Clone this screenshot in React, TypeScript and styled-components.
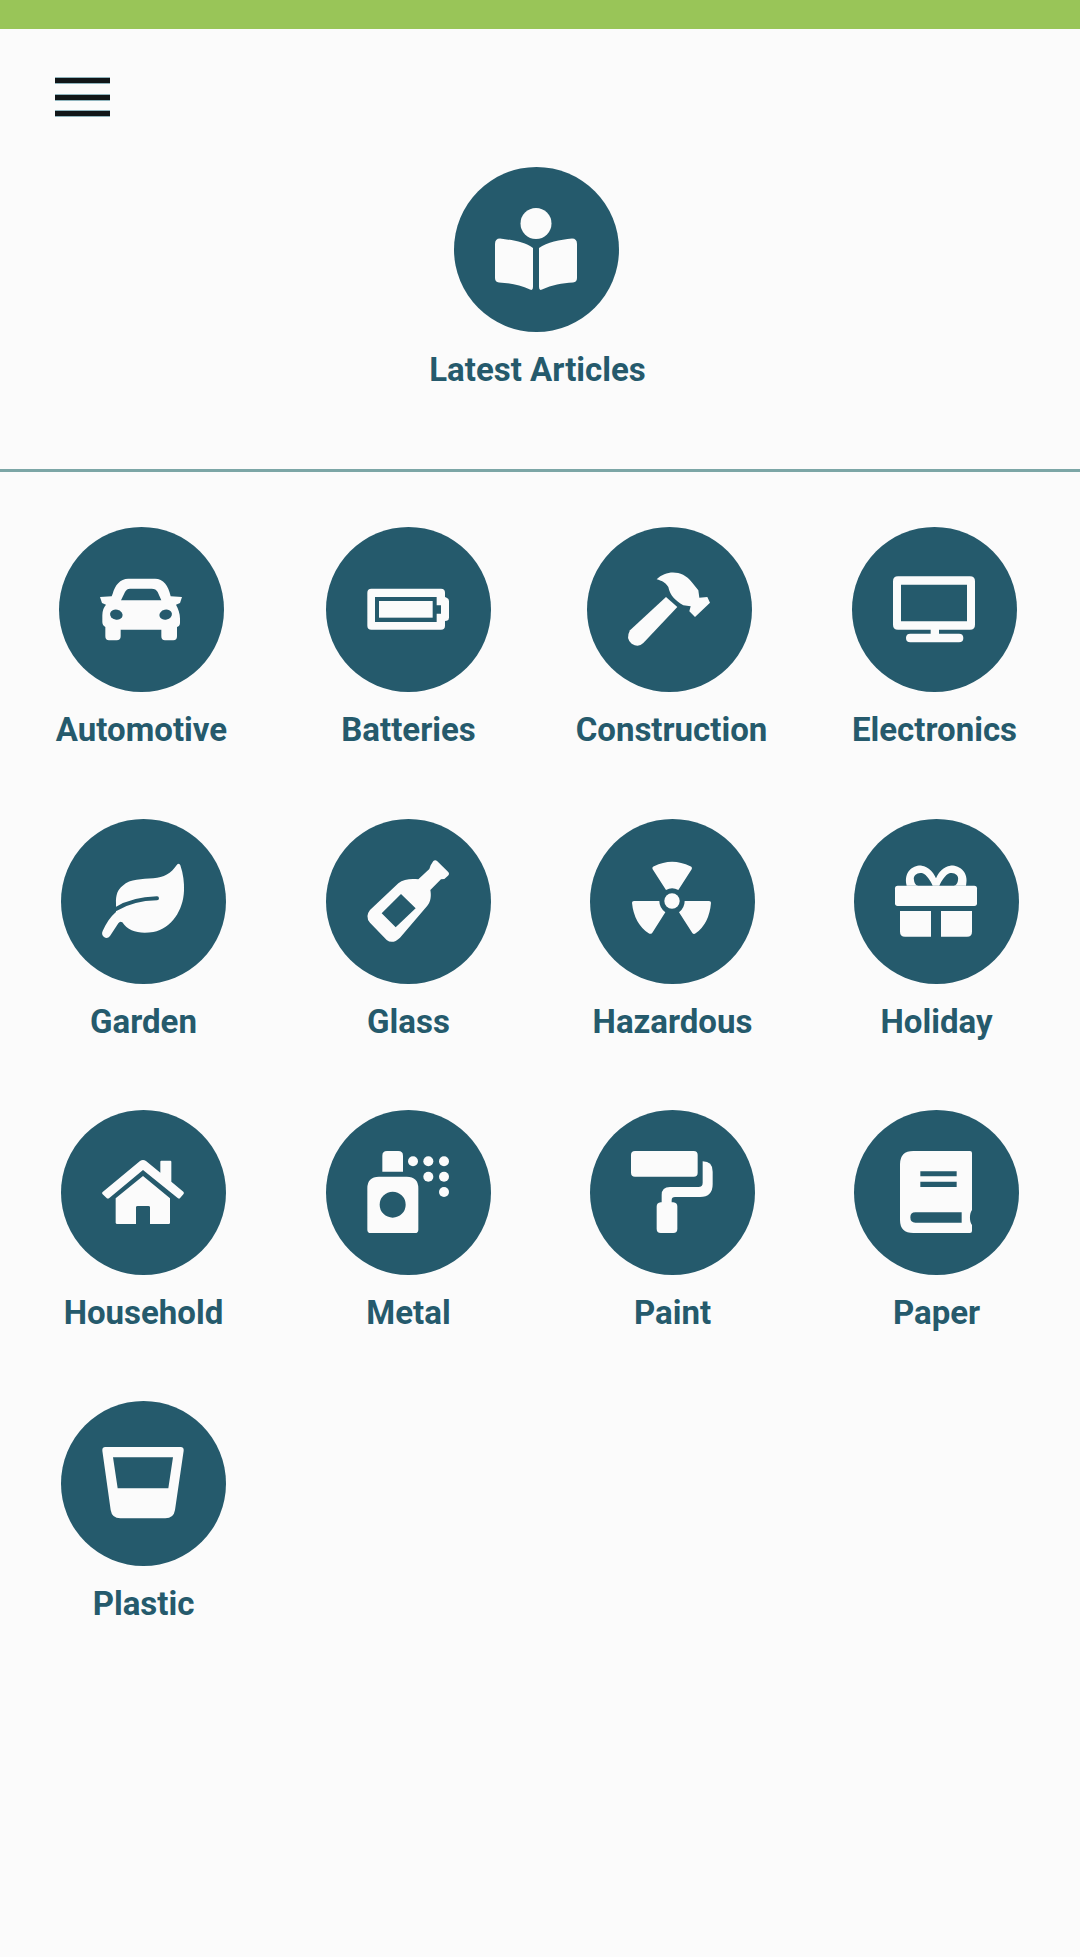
import React from "react";
import styled, { createGlobalStyle } from "styled-components";

const TEAL = "#255a6c";

// every icon's viewBox is 165x165 px of the disc (495 units = 3 units per px)
const CarIcon = () => (
  <Glyph viewBox="57 50 495 495">
    <path
      fillRule="evenodd"
      d="M180 260 L215 258 L218 250 C225 225 240 205 265 205 L345 205 C370 205 385 225 392 258 L426 260 L420 278 L408 283 C415 295 420 310 420 325 L420 338 C420 345 416 349 411 350 L411 378 Q411 390 400 390 L375 390 Q364 390 364 378 L364 358 L242 358 L242 378 Q242 390 230 390 L207 390 Q196 390 196 378 L196 350 Q187 345 187 335 L187 315 C187 300 192 290 198 283 L186 278 Z M243 270 L255 245 Q260 235 270 235 L335 235 Q348 235 353 245 L364 270 Z"
    />
    <Cut as="ellipse" cx="229" cy="313" rx="19" ry="15" transform="rotate(12 229 313)" />
    <Cut as="ellipse" cx="377" cy="313" rx="19" ry="15" transform="rotate(-12 377 313)" />
  </Glyph>
);

const BatteryIcon = () => (
  <Glyph viewBox="858 50 495 495">
    <path
      fillRule="evenodd"
      d="M994 235 L1203 235 Q1215 235 1215 247 L1215 260 L1220 262 Q1227 264 1227 272 L1227 322 Q1227 330 1220 331 L1215 332 L1215 346 Q1215 358 1203 358 L994 358 Q982 358 982 346 L982 247 Q982 235 994 235 Z M1005 260 L1005 335 L1190 335 L1190 310 L1203 310 L1203 285 L1190 285 L1190 260 Z"
    />
    <rect x="1017" y="272" width="161" height="50" />
  </Glyph>
);

const HammerIcon = () => (
  <Glyph viewBox="81 50 495 495">
    <path d="M318 260 L352 290 L250 398 Q235 413 215 400 Q196 385 210 360 Z" />
    <path d="M290 207 C320 178 368 180 395 215 L415 240 L418 262 L442 260 L450 277 L405 320 L388 303 L392 288 L370 285 C345 270 330 255 325 230 C315 215 305 212 290 207 Z" />
  </Glyph>
);

const ScreenIcon = () => (
  <Glyph viewBox="876 50 495 495">
    <path
      fillRule="evenodd"
      d="M1014 198 L1230 198 Q1245 198 1245 213 L1245 343 Q1245 358 1230 358 L1137 358 L1137 370 L1197 370 Q1210 370 1210 383 Q1210 396 1197 396 L1051 396 Q1038 396 1038 383 Q1038 370 1051 370 L1112 370 L1112 358 L1014 358 Q999 358 999 343 L999 213 Q999 198 1014 198 Z M1023 223 L1023 333 L1221 333 L1221 223 Z"
    />
  </Glyph>
);

const LeafIcon = () => (
  <Glyph viewBox="63 57 495 495">
    <path d="M412 193 Q418 188 421 196 C430 222 433 248 432 272 C430 330 395 385 340 396 C300 403 265 395 247 367 Q240 362 235 370 L210 408 Q202 418 192 411 Q183 404 188 393 C198 370 212 350 228 336 L228 310 C227 285 233 268 248 257 C272 236 305 238 340 235 C372 232 392 222 412 193 Z" />
    <Vein d="M351 295 C305 296 262 306 226 328" />
  </Glyph>
);

const BottleIcon = () => (
  <Glyph viewBox="858 57 495 495">
    <path
      fillRule="evenodd"
      d="M1168 207 L1172 196 L1180 183 Q1186 178 1192 184 L1224 215 Q1230 221 1224 227 L1213 237 L1203 238 L1171 270 C1174 285 1173 305 1162 317 L1080 413 Q1058 434 1040 420 L990 368 Q974 350 990 330 L1075 250 C1090 237 1115 235 1135 238 Z M1083 282 L1025 340 L1067 382 L1127 325 Z"
    />
  </Glyph>
);

const HazardIcon = () => (
  <Glyph viewBox="90 57 495 495">
    <circle cx="336" cy="303" r="23" />
    <path d="M278 208 Q275 202 282 199 Q336 172 391 199 Q398 202 395 208 L355 270 Q336 260 318 270 Z" />
    <path d="M216 308 Q216 303 222 303 L298 303 Q298 323 316 337 L277 398 Q272 404 266 400 Q222 370 216 308 Z" />
    <path d="M453 308 Q453 303 447 303 L374 303 Q374 323 357 337 L397 399 Q401 404 407 400 Q448 370 453 308 Z" />
  </Glyph>
);

const GiftIcon = () => (
  <Glyph viewBox="882 57 495 495">
    <path
      fillRule="evenodd"
      d="M1040 257 C1030 215 1060 195 1085 197 C1105 200 1120 215 1128 235 C1136 215 1151 200 1171 197 C1196 195 1228 215 1218 257 Z M1062 240 C1058 225 1075 215 1088 220 C1100 225 1110 240 1118 257 L1075 257 C1068 257 1063 250 1062 240 Z M1194 240 C1198 225 1181 215 1168 220 C1156 225 1146 240 1138 257 L1181 257 C1188 257 1193 250 1194 240 Z"
    />
    <rect x="1005" y="257" width="246" height="61" rx="8" />
    <path d="M1020 333 L1113 333 L1113 410 L1035 410 Q1020 410 1020 395 Z" />
    <path d="M1143 333 L1236 333 L1236 395 Q1236 410 1221 410 L1143 410 Z" />
  </Glyph>
);

const HouseIcon = () => (
  <Glyph viewBox="63 60 495 495">
    <path d="M188 306 L300 213 Q309 207 318 213 L361 248 L361 215 Q361 212 364 212 L391 212 Q394 212 394 215 L394 275 L430 305 Q434 309 430 313 L421 323 Q418 328 413 324 L309 240 L208 324 Q203 328 199 323 L188 313 Q184 309 188 306 Z" />
    <path d="M227 325 L309 258 L390 325 L390 398 Q390 402 386 402 L330 402 L330 352 Q330 348 325 348 L293 348 Q288 348 288 352 L288 402 L232 402 Q227 402 227 398 Z" />
  </Glyph>
);

const SprayIcon = () => (
  <Glyph viewBox="858 60 495 495">
    <path d="M1027 245 L1027 197 Q1027 183 1041 183 L1075 183 Q1089 183 1089 197 L1089 245 Z" />
    <path
      fillRule="evenodd"
      d="M1017 260 L1100 260 Q1135 260 1135 295 L1135 419 Q1135 429 1125 429 L992 429 Q982 429 982 419 L982 295 Q982 260 1017 260 Z M1058 305 A39 39 0 1 0 1058 383 A39 39 0 1 0 1058 305 Z"
    />
    <circle cx="1119" cy="214" r="15" />
    <circle cx="1165" cy="214" r="15" />
    <circle cx="1212" cy="214" r="15" />
    <circle cx="1165" cy="260" r="15" />
    <circle cx="1212" cy="260" r="15" />
    <circle cx="1212" cy="306" r="15" />
  </Glyph>
);

const RollerIcon = () => (
  <Glyph viewBox="90 60 495 495">
    <rect x="213" y="183" width="200" height="77" rx="12" />
    <path d="M428 214 Q458 214 458 245 L458 283 Q458 321 420 321 L345 321 Q335 321 335 331 L335 340 L305 340 L305 315 Q305 291 330 291 L415 291 Q428 291 428 278 Z" />
    <path d="M290 350 Q290 338 302 337 L340 337 Q352 338 352 350 L352 417 Q352 429 340 429 L302 429 Q290 429 290 417 Z" />
  </Glyph>
);

const BookIcon = () => (
  <Glyph viewBox="882 60 495 495">
    <path
      fillRule="evenodd"
      d="M1060 183 L1230 183 Q1236 183 1236 189 L1236 360 C1228 370 1228 395 1236 405 L1236 423 Q1236 429 1230 429 L1060 429 Q1020 429 1020 390 L1020 223 Q1020 183 1060 183 Z M1081 244 L1081 259 L1190 259 L1190 244 Z M1081 275 L1081 291 L1190 291 L1190 275 Z M1066 367 Q1051 367 1051 382 Q1051 398 1066 398 L1205 398 L1205 367 Z"
    />
  </Glyph>
);

const CupIcon = () => (
  <Glyph viewBox="63 63 495 495">
    <path
      fillRule="evenodd"
      d="M196 201 L422 201 Q432 201 431 212 L405 390 Q401 415 376 415 L241 415 Q216 415 212 390 L187 212 Q186 201 196 201 Z M219 232 L233 325 L385 325 L399 232 Z"
    />
  </Glyph>
);

const ReaderIcon = () => (
  <Glyph viewBox="454 167 165 165">
    <circle cx="536" cy="223.5" r="15.5" />
    <path d="M495 244 Q495 238.500 500 238.500 C512 240 525 242 533 248 L533 287 Q533 291 530 289.500 C520 285 510 283 499 282.500 Q495 282 495 278 Z" />
    <path d="M577 244 Q577 238.500 572 238.500 C560 240 547 242 539 248 L539 287 Q539 291 542 289.500 C552 285 562 283 573 282.500 Q577 282 577 278 Z" />
  </Glyph>
);

const rows = [
  {
    wide: true,
    items: [
      { label: "Automotive", icon: <CarIcon />, nudge: 0 },
      { label: "Batteries", icon: <BatteryIcon />, nudge: 0 },
      { label: "Construction", icon: <HammerIcon />, nudge: 4 },
      { label: "Electronics", icon: <ScreenIcon />, nudge: 0 },
    ],
  },
  {
    wide: false,
    items: [
      { label: "Garden", icon: <LeafIcon />, nudge: 0 },
      { label: "Glass", icon: <BottleIcon />, nudge: 0 },
      { label: "Hazardous", icon: <HazardIcon />, nudge: 0 },
      { label: "Holiday", icon: <GiftIcon />, nudge: 0 },
    ],
  },
  {
    wide: false,
    items: [
      { label: "Household", icon: <HouseIcon />, nudge: 0 },
      { label: "Metal", icon: <SprayIcon />, nudge: 0 },
      { label: "Paint", icon: <RollerIcon />, nudge: 0 },
      { label: "Paper", icon: <BookIcon />, nudge: 0 },
    ],
  },
  {
    wide: false,
    items: [{ label: "Plastic", icon: <CupIcon />, nudge: 0 }],
  },
];

const App = () => {
  return (
    <>
      <GlobalStyle />
      <Page>
        <StatusBar />
        <MenuButton>
          <MenuLine />
          <MenuLine />
          <MenuLine />
        </MenuButton>
        <Hero>
          <Tile>
            <Disc $nudge={2}>
              <ReaderIcon />
            </Disc>
            <Label>Latest Articles</Label>
          </Tile>
        </Hero>
        <Categories>
          {rows.map((row) => (
            <Row key={row.items[0].label} $wide={row.wide}>
              {row.items.map((item) => (
                <Tile key={item.label}>
                  <Disc $nudge={item.nudge}>{item.icon}</Disc>
                  <Label>{item.label}</Label>
                </Tile>
              ))}
            </Row>
          ))}
        </Categories>
      </Page>
    </>
  );
};

export default App;

const GlobalStyle = createGlobalStyle`
  body {
    margin: 0;
    background-color: #fbfbfb;
    font-family: Roboto, "Liberation Sans", sans-serif;
  }
`;

const Page = styled.div`
  width: 1080px;
  min-height: 1957px;
  background-color: #fbfbfb;
`;

const StatusBar = styled.div`
  height: 29px;
  background-color: #99c558;
`;

const MenuButton = styled.div`
  width: 55px;
  height: 40px;
  margin: 48px 0 0 55px;
  display: flex;
  flex-direction: column;
  justify-content: space-between;
`;

const MenuLine = styled.span`
  display: block;
  height: 5px;
  background-color: #111618;
  border-top: 1px solid #8fb4bd;
  border-bottom: 1px solid #8fb4bd;
`;

const Hero = styled.div`
  height: 302px;
  margin-top: 50px;
  padding-right: 5px;
  display: flex;
  justify-content: center;
  border-bottom: 3px solid #7ca6a6;
`;

const Categories = styled.div`
  padding-top: 55px;
`;

const Row = styled.div<{ $wide: boolean }>`
  display: grid;
  grid-template-columns: ${(props) =>
    props.$wide ? "283px 251px 275px 251px" : "287px 243px 285px 243px"};
  height: ${(props) => (props.$wide ? "292px" : "291px")};
`;

const Tile = styled.div`
  display: flex;
  flex-direction: column;
  align-items: center;
`;

const Disc = styled.div<{ $nudge: number }>`
  width: 165px;
  height: 165px;
  margin-right: ${(props) => props.$nudge}px;
  border-radius: 50%;
  background-color: ${TEAL};
  flex: none;
`;

const Glyph = styled.svg`
  display: block;
  width: 165px;
  height: 165px;
  fill: #fbfbfb;
`;

const Cut = styled.path`
  fill: ${TEAL};
`;

const Vein = styled.path`
  fill: none;
  stroke: ${TEAL};
  stroke-width: 12;
  stroke-linecap: round;
`;

const Label = styled.div`
  margin-top: 19px;
  font-size: 33px;
  line-height: 38px;
  font-weight: 700;
  color: ${TEAL};
  white-space: nowrap;
`;
